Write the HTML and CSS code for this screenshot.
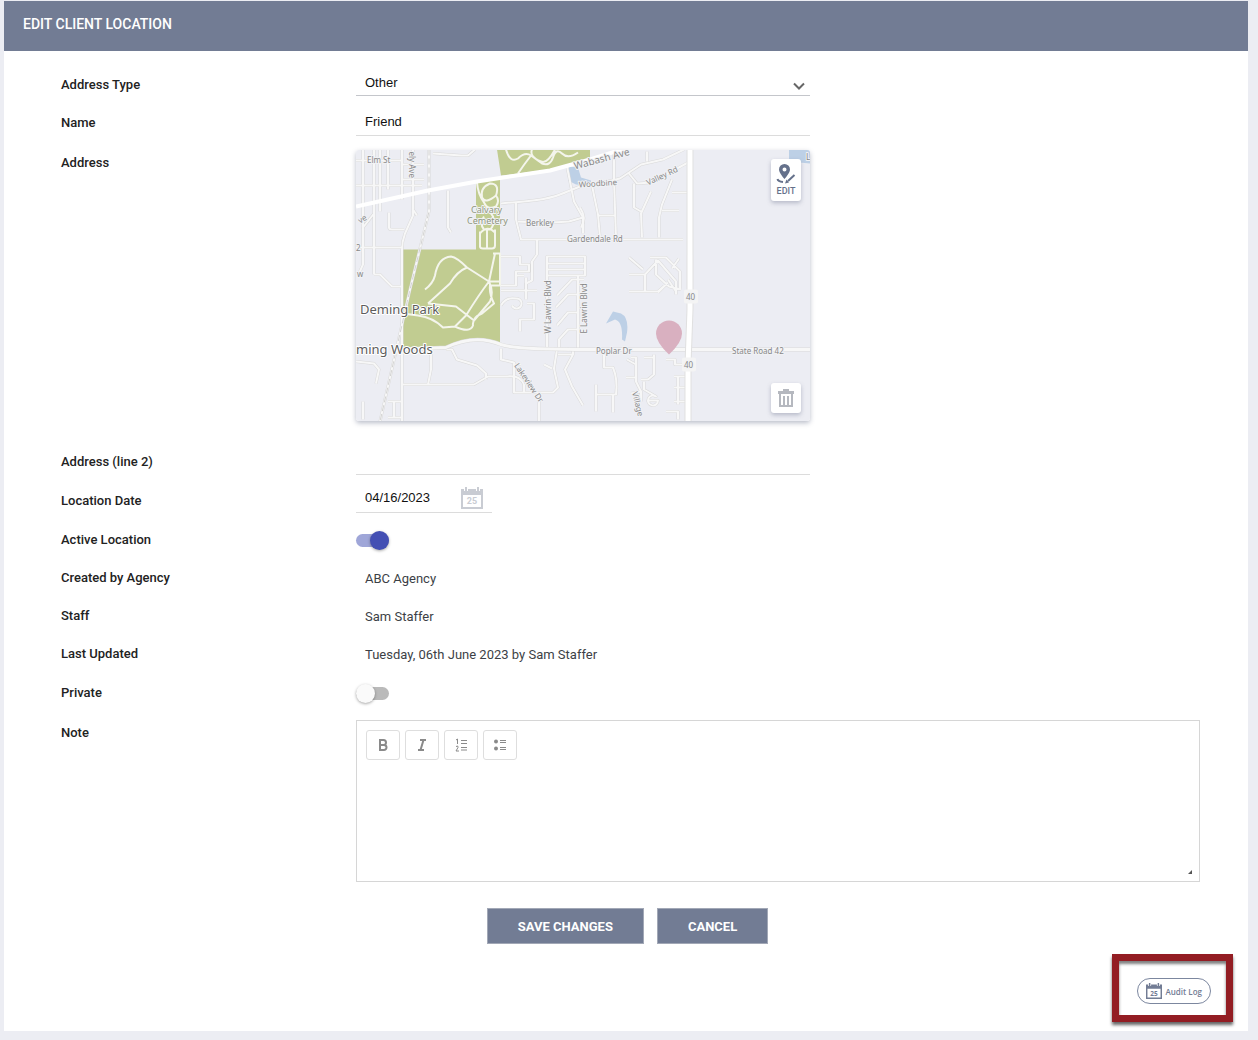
FILE: index.html
```html
<!DOCTYPE html>
<html lang="en">
  <head>
    <meta charset="UTF-8" />
    <meta name="viewport" content="width=device-width, initial-scale=1.0" />
    <title>Edit Client Location</title>
    <link rel="stylesheet" href="styles.css">
  </head>
  <body>
    <main class="card">
      <h1 class="card-header">EDIT CLIENT LOCATION</h1>

      <form class="location-form">
        <div class="row">
          <label class="label" for="addressType">Address Type</label>
          <div class="field select-field">
            <select class="control" id="addressType">
              <option>Other</option>
              <option>Home</option>
              <option>Work</option>
            </select>
            <svg class="chevron" viewBox="0 0 12 8"><path d="M1 1.500 6 6.500l5-5" /></svg>
          </div>
        </div>

        <div class="row">
          <label class="label" for="name">Name</label>
          <div class="field"><input class="control light" id="name" type="text" value="Friend" /></div>
        </div>

        <div class="row row-map">
          <span class="label">Address</span>
          <div class="field map">
            <svg class="map-canvas" viewBox="0 0 454 272" preserveAspectRatio="xMidYMid slice" role="img" aria-label="Map of the address">
              <defs>
                <g id="streets">
                  <!-- north west grid -->
                  <path d="M7 0V78L18 64M18 0V125M32 0V40M46 0V50M57 0V66L49 84Q46 92 46 100V272M24 0V62" />
                  <path d="M0 11H46M0 36H66M46 15H68M46 30H68M0 98H46M7 78V115L2 126M18 125H24L36 137H46M33 63V78Q33 80 36 80H48" />
                  <path d="M73 0V62L54 140L24 272M92 41V78L95 83M77 4L105 6L112 6L119 0" />
                  <path d="M57 60L61 66" />
                  <!-- east of the cemetery -->
                  <path d="M145 54C170 51 188 53 214 41L224 37M160 53V70L165 90H327M162 72Q190 74 213 72L227 68M211 17L218 52L227 68V84" />
                  <path d="M181 90V105L176 112V131L170 134V150M145 107H164V115H173V122H160V136H145M160 126H168" />
                  <path d="M191 107H229V126H191ZM191 114H229M191 120H229M191 107V200M222 126V200" />
                  <path d="M228 130H216L201 146M222 145H212L200 158M222 163H212L201 176M222 180H212L203 190V200" />
                  <path d="M145 141H181M170 128V141M171 154H178V170H164V182M145 156Q150 147 160 149A5 5 0 1 1 156 156" />
                  <!-- Woodbine and Valley Rd -->
                  <path d="M258 2V30L260 88M234 36L264 29L285 15L307 10L328 0M291 2V12M273 24L281 34L295 33L334 12" />
                  <path d="M278 34V58L285 62M295 42L285 64L286 88M236 36L242 65L244 88M243 66H260M316 30L306 55L303 68V88M306 61H323M316 43H334M224 58Q231 68 225 78" />
                  <!-- cul-de-sacs -->
                  <path d="M273 125H289L302 111L320 132V145M289 125V142M273 108L287 120M294 108H310L324 122V140M300 110V125L313 137L325 140M302 143L310 135M316 119L323 109M273 142H302L312 133M312 130L320 142" />
                  <!-- south -->
                  <path d="M46 235H118L132 227H151M90 200H96L101 210L121 216L130 224V230M75 202V220L72 235M0 212L18 214L23 220L20 234M145 199V210L158 213V243H197L202 238L198 219L201 200" />
                  <path d="M151 227Q164 225 168 235V243M165 215H158M183 243V272M188 215L196 219M202 205H217V200M217 205L209 220L216 237L227 256M7 252V270M32 252H46M38 252V268M32 268H46" />
                  <path d="M248 205V218H257Q262 230 260 245H240V235M240 236V262M257 245V263M275 208H280V232L285 242M271 210L280 215M285 230H292L298 225V205M288 208H298M288 232V240L300 247A5 5 0 1 0 302 251H292" />
                  <path d="M310 210H319V215H330M318 227H330M318 238H330M310 262H322V270M318 252H330M322 226V255M270 228H280M275 244L285 242V252" />
                </g>
                <g id="trails">
                  <path d="M150 0Q154 14 162 9Q169 2 175 6L186 14Q194 17 197 8Q200 -2 206 4T222 3M175 6Q168 15 162 24M176 0Q173 7 185 12Q191 15 199 0" />
                  <path d="M121 33Q122 45 128 53Q131 61 140 57Q144 51 140 46Q144 34 134 34Q124 38 126 48Q129 55 140 46M128 53L137 67Q139 76 134 80H128Q123 74 128 67M124 82V97Q124 99 127 99H136Q139 99 139 96V80M131 80V99M124 84Q131 75 139 83" />
                  <path d="M69 140Q77 134 79 126Q82 108 95 107Q101 108 111 118L133 132H144M111 118Q101 122 94 134L72 154M139 104L133 132Q138 142 134 152L118 171L100 157L72 154M133 132Q123 145 110 166L99 177L87 178Q77 168 62 166L47 164M99 177Q114 184 117 176Q116 168 126 164L138 154Q133 144 134 136M137 104H144V136H133" />
                </g>
              </defs>

              <rect class="land" width="454" height="272" />
              <path class="park" d="M141 0L145 26L194 20L234 9V0ZM120 33L144 28V195Q119 182 90 197L46 200V100H120Z" />
              <path class="water" d="M213 17L222 18L225 28L235 31V36L220 35L212 31ZM433 0H454V14L433 12ZM250 174L257 162L265 164Q273 168 271 183L269 192L266 190Q267 172 259 170Z" />
              <use class="casing" href="#streets" />
              <use class="street" href="#streets" />
              <path class="rail" d="M73 0V62L54 140L24 272" />
              <use class="trail" href="#trails" />

              <path class="casing main" d="M44 200L90 198Q119 184 145 195Q158 200 234 200H454" />
              <path class="street main" d="M44 200L90 198Q119 184 145 195Q158 200 234 200H454" />
              <path class="highway" d="M0 57L72 41L121 32L194 21L234 10L272 -2" />
              <path class="casing route" d="M334 0V160L332 215V272" />
              <path class="route" d="M334 0V160L332 215V272" />
              <rect class="shield" x="328" y="140" width="14" height="14" rx="2" />
              <rect class="shield" x="326" y="208" width="14" height="14" rx="2" />

              <g class="street-name">
                <text x="11" y="13">Elm St</text>
                <text transform="translate(53 2) rotate(90)">ely Ave</text>
                <text transform="translate(4 74) rotate(-30)">ve</text>
                <text class="large" transform="translate(219 20) rotate(-15)">Wabash Ave</text>
                <text transform="translate(223 38) rotate(-4)">Woodbine</text>
                <text transform="translate(292 36) rotate(-25)">Valley Rd</text>
                <text x="170" y="76">Berkley</text>
                <text x="211" y="92">Gardendale Rd</text>
                <text class="green" x="115" y="63">Calvary</text>
                <text class="green" x="111" y="74">Cemetery</text>
                <text transform="translate(195 184) rotate(-90)">W Lawrin Blvd</text>
                <text transform="translate(231 184) rotate(-90)">E Lawrin Blvd</text>
                <text x="240" y="204">Poplar Dr</text>
                <text x="376" y="204">State Road 42</text>
                <text transform="translate(158 216) rotate(56)">Lakeview Dr</text>
                <text transform="translate(276 243) rotate(76)">Village</text>
                <text x="330" y="150">40</text>
                <text x="328" y="218">40</text>
                <text x="0" y="101">2</text>
                <text x="1" y="127">w</text>
                <text x="450" y="10">L</text>
              </g>
              <g class="place-name">
                <text x="4" y="164">Deming Park</text>
                <text x="0" y="204">ming Woods</text>
              </g>
              <path class="pin" d="M313 205Q300 193 300 184A13 13 0 0 1 326 184Q326 193 313 205Z" />
            </svg>

            <button class="map-button edit-button" type="button">
              <svg viewBox="0 0 20 22">
                <path class="solid" fill-rule="evenodd" d="M8.500 1A5.500 5.500 0 0 0 3 6.500C3 10 8.500 16 8.500 16S14 10 14 6.500A5.500 5.500 0 0 0 8.500 1ZM8.500 4.500A2 2 0 1 1 8.500 8.500A2 2 0 0 1 8.500 4.500Z" />
                <path class="line" d="M1.500 16Q2 18.500 7 19M12 18L18.500 12" />
                <path class="solid" d="M10.500 16.500L9 20.500L13 19.500Z" />
              </svg>
              EDIT
            </button>
            <button class="map-button trash-button" type="button" aria-label="Delete address">
              <svg viewBox="0 0 16 18">
                <path class="lid" d="M0 2H5V0H11V2H16V5H0Z" />
                <path class="bin" d="M2 5V17H14V5M6 7V16M10 7V16" />
              </svg>
            </button>
          </div>
        </div>

        <div class="row">
          <label class="label" for="address2">Address (line 2)</label>
          <div class="field"><input class="control light" id="address2" type="text" /></div>
        </div>

        <div class="row tall">
          <label class="label" for="locationDate">Location Date</label>
          <div class="date-field">
            <input class="date-input" id="locationDate" type="text" value="04/16/2023" />
            <button class="date-button" type="button" aria-label="Choose date">
              <svg class="calendar" viewBox="0 0 22 22">
                <path class="cal-fill" fill-rule="evenodd" d="M0 2H3V4H7V2H15V4H19V2H22V22H0ZM2 8V20H20V8Z" />
                <path class="cal-ring" d="M5 0V4M17 0V4" />
                <text x="11" y="17">25</text>
              </svg>
            </button>
          </div>
        </div>

        <div class="row">
          <label class="label" for="active">Active Location</label>
          <input class="toggle" id="active" type="checkbox" role="switch" checked />
        </div>

        <div class="row">
          <span class="label">Created by Agency</span>
          <span class="value">ABC Agency</span>
        </div>

        <div class="row">
          <span class="label">Staff</span>
          <span class="value">Sam Staffer</span>
        </div>

        <div class="row">
          <span class="label">Last Updated</span>
          <span class="value">Tuesday, 06th June 2023 by Sam Staffer</span>
        </div>

        <div class="row tall">
          <label class="label" for="private">Private</label>
          <input class="toggle" id="private" type="checkbox" role="switch" />
        </div>

        <div class="row row-note">
          <label class="label" for="note">Note</label>
          <div class="editor">
            <div class="toolbar">
              <button class="tool" type="button" aria-label="Bold">
                <svg viewBox="0 0 16 16"><path class="bold" d="M5 3V13H9A2.500 2.500 0 0 0 9 8H5H8.500A2.500 2.500 0 0 0 8.500 3Z" /></svg>
              </button>
              <button class="tool" type="button" aria-label="Italic">
                <svg viewBox="0 0 16 16"><path class="italic" d="M6 3H12M4 13H10M9.500 3L6.500 13" /></svg>
              </button>
              <button class="tool" type="button" aria-label="Numbered list">
                <svg viewBox="0 0 16 16"><path class="list" d="M8 3.500H14M8 6.500H14M8 10.500H14M8 13H14M3 3L4.500 2V7M3 9.500Q5.500 8 5 10.500L3 14H6" /></svg>
              </button>
              <button class="tool" type="button" aria-label="Bulleted list">
                <svg viewBox="0 0 16 16"><path class="list" d="M8 3.500H14M8 5.500H14M8 10.500H14M8 12.500H14" /><circle cx="4" cy="4.500" r="2" /><circle cx="4" cy="11.500" r="2" /></svg>
              </button>
            </div>
            <textarea class="note" id="note"></textarea>
            <span class="grip"></span>
          </div>
        </div>

        <div class="actions">
          <button class="button" type="submit">SAVE CHANGES</button>
          <button class="button" type="button">CANCEL</button>
        </div>
      </form>

      <div class="card-footer">
        <div class="highlight">
          <button class="audit-button" type="button">
            <svg class="calendar" viewBox="0 0 22 22">
              <path class="cal-fill" fill-rule="evenodd" d="M0 2H3V4H7V2H15V4H19V2H22V22H0ZM2 8V20H20V8Z" />
              <path class="cal-ring" d="M5 0V4M17 0V4" />
              <text x="11" y="18">25</text>
            </svg>
            Audit Log
          </button>
        </div>
      </div>
    </main>
  </body>
</html>
```

FILE: styles.css
```css
* {
  box-sizing: border-box;
}

body {
  margin: 0;
  padding: 1px 10px 9px 4px;
  background-color: #ecedf3;
  color: #3c3f46;
  font-family: Roboto, sans-serif;
  font-size: 13px;
}

button,
input,
select,
textarea {
  font: inherit;
  color: inherit;
  margin: 0;
}

button {
  cursor: pointer;
}

.card {
  background-color: #fff;
}

.card-header {
  margin: 0;
  padding: 0 19px;
  line-height: 47px;
  border-bottom: 3px solid #727c94;
  background-color: #727c94;
  color: #fff;
  font-size: 14px;
  font-weight: 500;
}

/* form rows */

.location-form {
  padding: 15px 48px 0 57px;
}

.row {
  display: grid;
  grid-template-columns: 295px minmax(0, 1fr);
  align-items: center;
  min-height: 38px;
}

.row.tall {
  min-height: 40px;
}

.label {
  color: #222;
  font-weight: 500;
  line-height: 18px;
}

.value {
  padding-left: 9px;
}

.field {
  position: relative;
  width: 100%;
  max-width: 454px;
}

.control {
  display: block;
  width: 100%;
  height: 30px;
  padding: 3px 9px 0;
  border: 0;
  border-bottom: 1px solid #c4c6cb;
  border-radius: 0;
  background: none;
  color: #111;
  font-family: "Liberation Sans", sans-serif;
  appearance: none;
  outline: none;
}

.control.light {
  height: 26px;
  padding: 0 9px 2px;
  border-color: #dcdcdc;
}

.select-field {
  align-self: start;
}

.chevron {
  position: absolute;
  right: 5px;
  bottom: 6px;
  width: 12px;
  height: 8px;
  fill: none;
  stroke: #666;
  stroke-width: 2;
  pointer-events: none;
}

/* map */

.row-map {
  align-items: start;
  padding: 8px 0 22px;
}

.row-map .label {
  padding-top: 4px;
}

.map {
  height: 271px;
  border-radius: 3px;
  box-shadow: 0 2px 5px rgba(80, 90, 120, 0.4);
}

.map-canvas {
  display: block;
  width: 100%;
  height: 100%;
  border-radius: 3px;
  fill: none;
  stroke-linejoin: round;
}

.land {
  fill: #ecedf3;
}

.park {
  fill: #c1cc91;
}

.water {
  fill: #bdd0e6;
}

.casing {
  stroke: #d9d9d9;
  stroke-width: 3;
}

.street {
  stroke: #f7f7f7;
  stroke-width: 2;
}

.rail {
  stroke: #d2d2d2;
  stroke-width: 1;
  stroke-dasharray: 6 3;
}

.trail {
  stroke: #f4f5ec;
  stroke-width: 2;
}

.casing.main {
  stroke-width: 4;
}

.street.main {
  stroke-width: 3;
}

.highway {
  stroke: #fff;
  stroke-width: 4;
}

.route {
  stroke: #fff;
  stroke-width: 5;
}

.casing.route {
  stroke: #e0e0e0;
  stroke-width: 7;
}

.shield {
  fill: #f4f4f4;
}

.street-name,
.place-name {
  font-family: "Noto Sans", sans-serif;
  font-size: 8px;
  fill: #888;
  stroke: #f1f2f5;
  stroke-width: 2px;
  paint-order: stroke;
}

.street-name .large {
  font-size: 10px;
}

.street-name .green {
  font-size: 9px;
  fill: #8d957d;
}

.place-name {
  font-size: 13px;
  fill: #5c5c5c;
  stroke: #fff;
}

.pin {
  fill: #d9b0c0;
}

.map-button {
  position: absolute;
  right: 9px;
  display: flex;
  flex-direction: column;
  align-items: center;
  justify-content: center;
  width: 30px;
  padding: 0;
  border: 0;
  border-radius: 3px;
  background-color: #fff;
  box-shadow: 0 2px 4px rgba(80, 90, 120, 0.35);
  color: #65718b;
  font-size: 9px;
  font-weight: 500;
  line-height: 12px;
}

.edit-button {
  top: 9px;
  height: 42px;
}

.edit-button svg {
  width: 20px;
  height: 22px;
}

.edit-button .solid {
  fill: #65718b;
}

.edit-button .line {
  fill: none;
  stroke: #65718b;
  stroke-width: 2;
}

.trash-button {
  bottom: 8px;
  height: 30px;
}

.trash-button svg {
  width: 16px;
  height: 18px;
}

.lid {
  fill: #b5b8bf;
}

.bin {
  fill: none;
  stroke: #b5b8bf;
  stroke-width: 2;
}

/* date */

.date-field {
  display: flex;
  align-items: center;
  width: 136px;
  height: 27px;
  padding: 0 9px 3px;
  border-bottom: 1px solid #dcdcdc;
  align-self: start;
  margin-top: 5px;
}

.date-input {
  flex: 1;
  min-width: 0;
  padding: 0;
  border: 0;
  background: none;
  color: #111;
  font-family: "Liberation Sans", sans-serif;
  outline: none;
}

.date-button {
  display: flex;
  padding: 0;
  border: 0;
  background: none;
  color: #c9ccd3;
}

.calendar {
  width: 22px;
  height: 22px;
}

.cal-fill {
  fill: currentColor;
}

.cal-ring {
  stroke: currentColor;
  stroke-width: 2;
}

.calendar text {
  fill: currentColor;
  font-size: 9px;
  font-weight: 700;
  text-anchor: middle;
}

/* switches */

.toggle {
  appearance: none;
  display: flex;
  align-items: center;
  width: 33px;
  height: 13px;
  border-radius: 7px;
  background-color: #bababa;
  cursor: pointer;
}

.toggle::before {
  content: "";
  width: 19px;
  height: 19px;
  border-radius: 50%;
  background-color: #fafafa;
  box-shadow: 0 1px 3px rgba(0, 0, 0, 0.35);
}

.toggle:checked {
  justify-content: flex-end;
  background-color: #9fa6d8;
}

.toggle:checked::before {
  background-color: #434fb3;
}

/* note editor */

.row-note {
  align-items: start;
  padding-top: 7px;
}

.row-note .label {
  padding-top: 4px;
}

.editor {
  position: relative;
  display: flex;
  flex-direction: column;
  border: 1px solid #d6d6d6;
}

.toolbar {
  display: flex;
  gap: 5px;
  padding: 9px 9px 0;
}

.tool {
  display: flex;
  align-items: center;
  justify-content: center;
  width: 34px;
  height: 30px;
  padding: 0;
  border: 1px solid #dedede;
  border-radius: 3px;
  background-color: #fff;
}

.tool svg {
  width: 16px;
  height: 16px;
  fill: #8a8a8a;
}

.tool path {
  fill: none;
  stroke: #8a8a8a;
}

.tool .bold,
.tool .italic {
  stroke-width: 2;
}

.note {
  height: 121px;
  padding: 9px;
  border: 0;
  background: none;
  resize: none;
  outline: none;
}

.grip {
  position: absolute;
  right: 7px;
  bottom: 7px;
  border-left: 4px solid transparent;
  border-bottom: 4px solid #555;
}

/* buttons */

.actions {
  display: flex;
  justify-content: center;
  gap: 13px;
  padding: 26px 6px 0 0;
}

.button {
  height: 36px;
  padding: 0 30px;
  border: 1px solid #a2a8b6;
  background-color: #727c94;
  color: #fff;
  font-weight: 700;
}

.card-footer {
  display: flex;
  justify-content: flex-end;
  padding: 10px 15px 9px;
}

.highlight {
  padding: 17px 15px 11px 18px;
  border: 7px solid #931d23;
  box-shadow: 0 3px 3px rgba(0, 0, 0, 0.6), inset 0 3px 3px rgba(0, 0, 0, 0.5);
}

.audit-button {
  display: flex;
  align-items: center;
  gap: 4px;
  height: 26px;
  padding: 0 8px;
  border: 1px solid #7c879f;
  border-radius: 13px;
  background-color: #fff;
  color: #727c94;
  font-family: "Open Sans", sans-serif;
  font-size: 8px;
  font-weight: 600;
}

.audit-button .calendar {
  width: 16px;
  height: 16px;
}
```
